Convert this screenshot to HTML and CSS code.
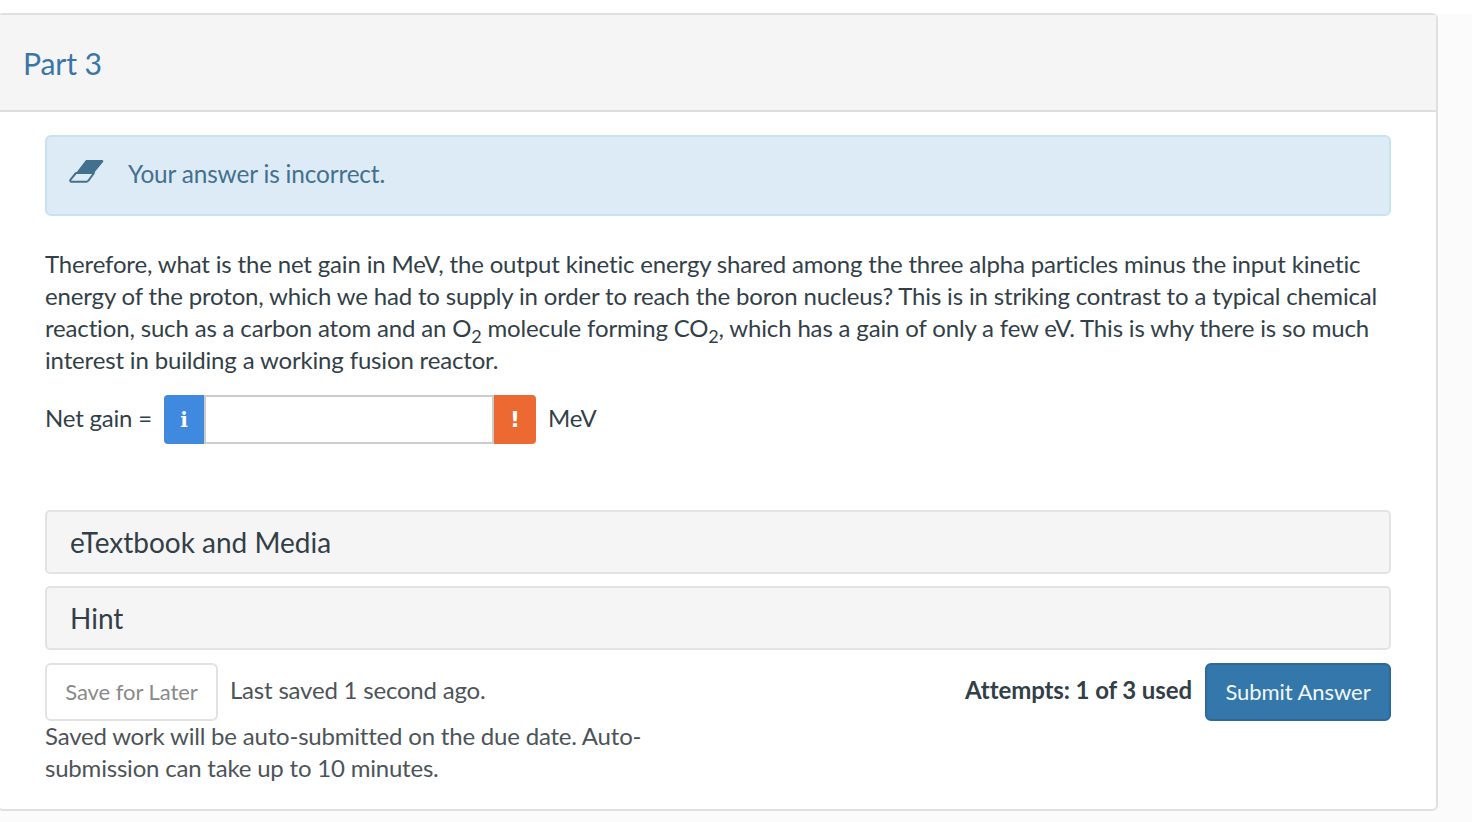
FILE: index.html
```html
<!DOCTYPE html>
<html lang="en">
<head>
    <meta charset="UTF-8">
    <meta name="viewport" content="width=device-width, initial-scale=1.0">
    <title>Part 3</title>
    <link rel="stylesheet" href="styles.css">
</head>
<body>

<div class="panel">
    <div class="panel-heading">
        <h3>Part 3</h3>
    </div>
    <div class="panel-body">
        <div class="alert">
            <svg class="eraser" width="36" height="24" viewBox="0 0 36 24">
                <path d="M17 0h16a1.200 1.200 0 0 1 1 2L25 13H7z" fill="#44708f"/>
                <path d="M7 13H25L19.500 20.500a3 3 0 0 1-2 1.200H2.500a1.300 1.300 0 0 1-1-2.100z" fill="none" stroke="#44708f" stroke-width="2" stroke-linejoin="round"/>
            </svg>
            <span>Your answer is incorrect.</span>
        </div>

        <p class="question">Therefore, what is the net gain in MeV, the output kinetic energy shared among the three alpha particles minus the input kinetic energy of the proton, which we had to supply in order to reach the boron nucleus? This is in striking contrast to a typical chemical reaction, such as a carbon atom and an O<sub>2</sub> molecule forming CO<sub>2</sub>, which has a gain of only a few eV. This is why there is so much interest in building a working fusion reactor.</p>

        <div class="answer-row">
            <label for="netGain">Net gain =</label>
            <div class="input-group">
                <span class="addon addon-info">i</span>
                <input type="text" id="netGain">
                <span class="addon addon-warn">!</span>
            </div>
            <span class="unit">MeV</span>
        </div>

        <div class="resource resource-first">eTextbook and Media</div>
        <div class="resource">Hint</div>

        <div class="actions">
            <div class="save-block">
                <div class="save-row">
                    <button type="button" class="btn btn-save">Save for Later</button>
                    <span>Last saved 1 second ago.</span>
                </div>
                <p class="save-note">Saved work will be auto-submitted on the due date. Auto-submission can take up to 10 minutes.</p>
            </div>
            <div class="submit-row">
                <strong>Attempts: 1 of 3 used</strong>
                <button type="button" class="btn btn-submit">Submit Answer</button>
            </div>
        </div>
    </div>
</div>

</body>
</html>
```

FILE: styles.css
```css
html {
    background: linear-gradient(#ffffff, #ffffff) top / 100% 14px no-repeat, #fbfbfb;
}

body {
    margin: 0;
    padding: 13px 34px 0 0;
    font-family: Lato, "Open Sans", sans-serif;
    font-size: 24px;
    line-height: 32px;
    letter-spacing: -0.16px;
    color: #333f48;
}

.panel {
    margin-left: -3px;
    height: 798px;
    box-sizing: border-box;
    background-color: #fff;
    border: 2px solid #e0e0e0;
    border-radius: 6px;
}

.panel-heading {
    height: 97px;
    box-sizing: border-box;
    padding-left: 24px;
    display: flex;
    align-items: center;
    background-color: #f5f5f5;
    border-bottom: 2px solid #dedede;
}

.panel-heading h3 {
    margin: 0;
    font-size: 30.2px;
    font-weight: 400;
    color: #3a76a8;
}

.panel-body {
    padding: 23px 45px 0 46px;
}

.alert {
    height: 81px;
    box-sizing: border-box;
    padding: 0 0 3px 22px;
    display: flex;
    align-items: center;
    gap: 23px;
    background-color: #dcebf6;
    border: 2px solid #c5e4ee;
    border-radius: 6px;
    font-size: 24.4px;
    color: #44708f;
}

.eraser {
    flex: none;
    margin-top: -4px;
}

.question {
    margin: 32px 0 0 0;
}

.question sub {
    font-size: 18px;
    line-height: 0;
}

.answer-row {
    margin-top: 19px;
    display: flex;
    align-items: center;
    gap: 12px;
}

.answer-row label,
.unit {
    margin-top: -3px;
}

.answer-row label {
    letter-spacing: -0.2px;
}

.input-group {
    display: flex;
    height: 49px;
}

.input-group input {
    width: 290px;
    box-sizing: border-box;
    border: 2px solid #cccccc;
    outline: none;
    background-color: #fff;
}

.addon {
    width: 40px;
    display: flex;
    align-items: center;
    justify-content: center;
    color: #fff;
    font-family: "DejaVu Serif", serif;
    font-weight: 700;
    font-size: 20px;
}

.addon-info {
    background-color: #3f8ade;
    border-radius: 4px 0 0 4px;
}

.addon-warn {
    width: 42px;
    background-color: #ec6a31;
    border-radius: 0 4px 4px 0;
    font-family: "DejaVu Sans", sans-serif;
    font-size: 22px;
}

.resource {
    height: 64px;
    box-sizing: border-box;
    margin-bottom: 12px;
    padding-left: 23px;
    display: flex;
    align-items: center;
    background-color: #f5f5f5;
    border: 2px solid #e3e3e3;
    border-radius: 5px;
    font-size: 28px;
    letter-spacing: 0;
}

.resource-first {
    margin-top: 66px;
}

.actions {
    margin-top: 13px;
    display: flex;
    justify-content: space-between;
    align-items: flex-start;
}

.save-block {
    width: 620px;
    letter-spacing: -0.2px;
}

.save-row {
    display: flex;
    align-items: center;
    gap: 12px;
    color: #4d5459;
}

.save-row span {
    margin-top: -4px;
}

.save-note {
    margin: -1px 0 0 0;
    color: #4d5459;
}

.submit-row {
    display: flex;
    align-items: center;
    gap: 13px;
}

.submit-row strong {
    margin-top: -4px;
    font-weight: 700;
    letter-spacing: -0.1px;
}

.btn {
    height: 58px;
    box-sizing: border-box;
    padding: 0 0 2px 0;
    font-family: inherit;
    font-size: 22px;
    letter-spacing: -0.05px;
    border-radius: 6px;
}

.btn-save {
    width: 173px;
    background-color: #fff;
    border: 2px solid #e2e2e2;
    color: #8a8a8a;
}

.btn-submit {
    width: 186px;
    background-color: #3477aa;
    border: 2px solid #2e6a99;
    color: #f2f7fb;
}
```
